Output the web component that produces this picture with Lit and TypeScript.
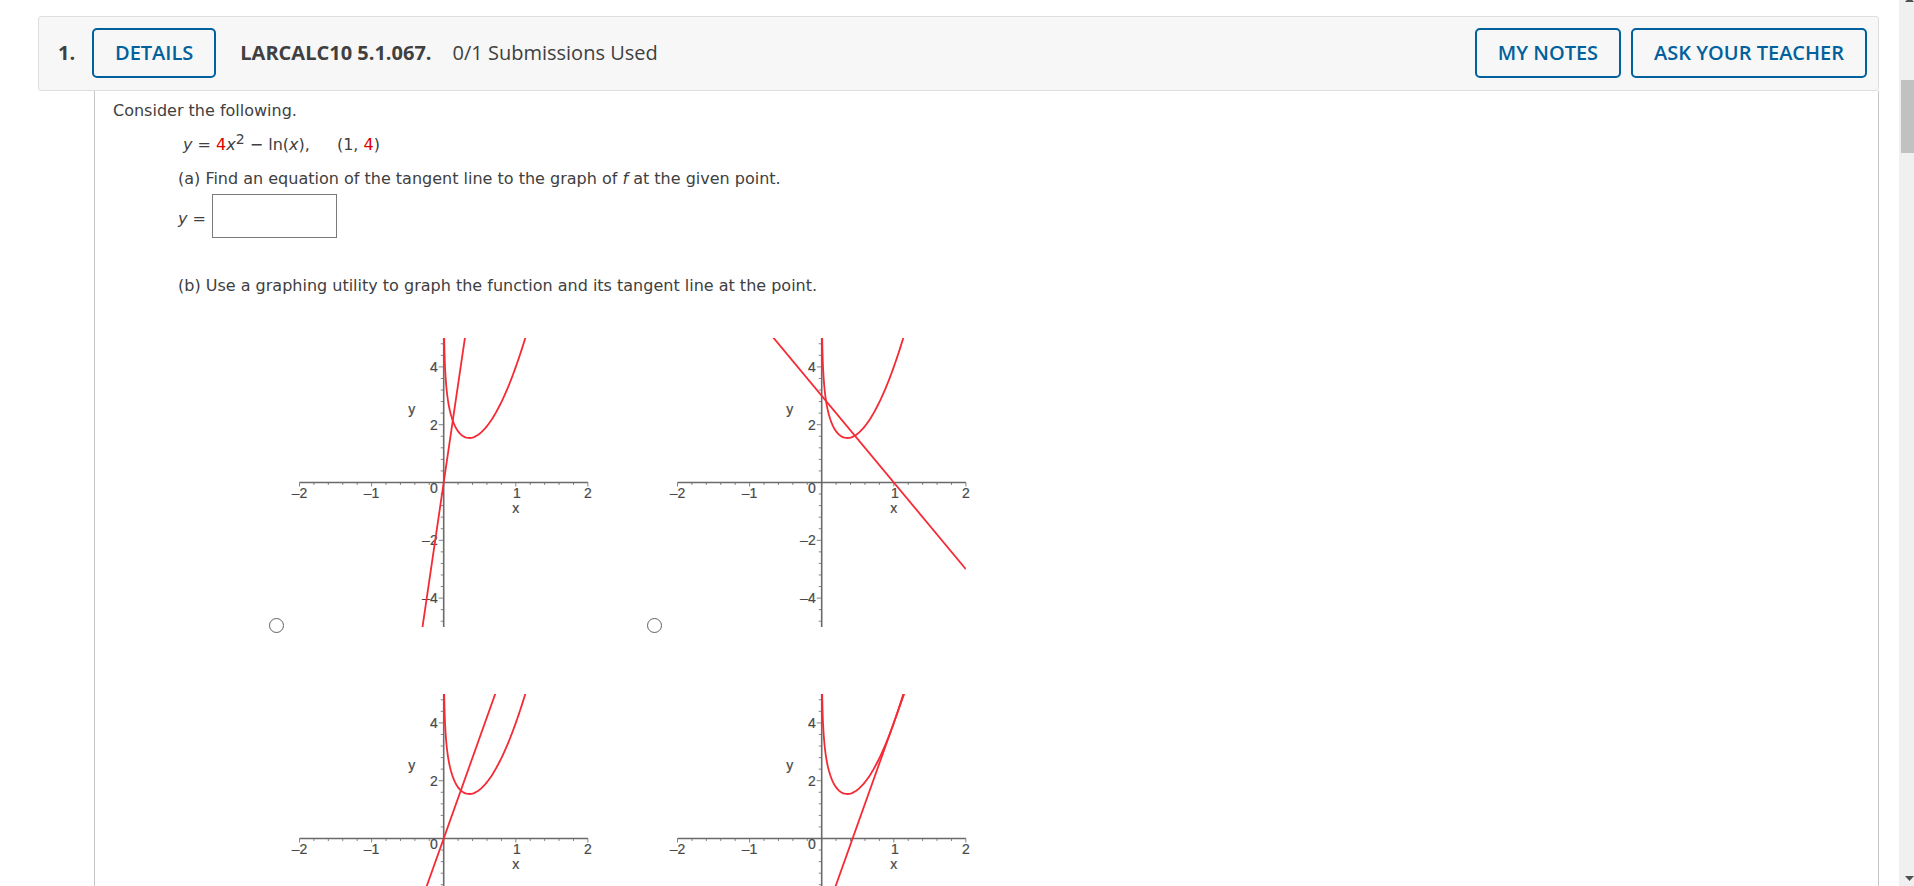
import { LitElement, html, svg, css } from "lit";
import { customElement, property } from "lit/decorators.js";

const UNIT_X = 72.1;
const UNIT_Y = 28.9;
const ORIGIN_X = 153.7;
const ORIGIN_Y = 152.5;

const px = (x: number) => +(ORIGIN_X + x * UNIT_X).toFixed(2);
const py = (y: number) => +(ORIGIN_Y - y * UNIT_Y).toFixed(2);

const curve = (() => {
  const points: string[] = [];
  for (let x = 0.004; x <= 1.2; x += x < 0.1 ? 0.004 : 0.02) {
    points.push(`${px(x)},${py(4 * x * x - Math.log(x))}`);
  }
  return points.join(" ");
})();

@customElement("tangent-graph")
export class TangentGraph extends LitElement {
  @property({ type: Number }) slope = 1;
  @property({ type: Number }) intercept = 0;

  static styles = css`
    :host {
      display: block;
    }
    .plot {
      display: block;
      width: 320px;
      height: 303px;
    }
    .axis {
      stroke: #6a6a6a;
      stroke-width: 1.6;
    }
    .tick {
      stroke: #858585;
      stroke-width: 1;
    }
    .line {
      fill: none;
      stroke: #f52a34;
      stroke-width: 1.8;
    }
    .number {
      font: 14px "Liberation Sans", Arial, sans-serif;
      fill: #484848;
      stroke: #484848;
      stroke-width: 0.2;
    }
    .mid {
      text-anchor: middle;
    }
    .end {
      text-anchor: end;
    }
  `;

  render() {
    const xTicks = Array.from({ length: 21 }, (_, i) => i - 10);
    const yTicks = Array.from({ length: 25 }, (_, i) => i - 12);
    const at = (x: number) => this.slope * x + this.intercept;
    return html`
      <svg class="plot" viewBox="0 0 320 303" role="img" aria-label="Graph of the function and a line">
        <defs>
          <clipPath id="frame">
            <rect x=${px(-2)} y=${py(5)} width=${4 * UNIT_X} height=${10 * UNIT_Y}></rect>
          </clipPath>
        </defs>
        ${xTicks.map(
          (i) => svg`<line class="tick" x1=${px(i / 5)} x2=${px(i / 5)} y1=${ORIGIN_Y} y2=${ORIGIN_Y + (i % 5 ? 2.5 : 4)}></line>`
        )}
        ${yTicks.map(
          (i) => svg`<line class="tick" y1=${py(i * 0.4)} y2=${py(i * 0.4)} x1=${ORIGIN_X} x2=${ORIGIN_X - (i % 5 ? 3 : 5)}></line>`
        )}
        <line class="axis" x1=${px(-2)} x2=${px(2)} y1=${ORIGIN_Y} y2=${ORIGIN_Y}></line>
        <line class="axis" x1=${ORIGIN_X} x2=${ORIGIN_X} y1=${py(5)} y2=${py(-5)}></line>
        ${[4, 2, -2, -4].map(
          (n) => svg`<text class="number end" x=${ORIGIN_X - 6} y=${py(n) + 5}>${n < 0 ? "–" + -n : n}</text>`
        )}
        <text class="number end" x=${ORIGIN_X - 6} y=${ORIGIN_Y + 10}>0</text>
        ${[-2, -1, 1, 2].map(
          (n) => svg`<text class="number mid" x=${px(n) + (n === 1 ? 1 : 0)} y=${ORIGIN_Y + 15}>${n < 0 ? "–" + -n : n}</text>`
        )}
        <text class="number mid" x=${px(1)} y=${ORIGIN_Y + 30}>x</text>
        <text class="number mid" x=${ORIGIN_X - 32} y=${ORIGIN_Y - 69}>y</text>
        <g clip-path="url(#frame)">
          <polyline class="line" points=${curve}></polyline>
          <line class="line" x1=${px(-2)} y1=${py(at(-2))} x2=${px(2)} y2=${py(at(2))}></line>
        </g>
      </svg>
    `;
  }
}

const CHOICES = [
  { slope: 17, intercept: 0 },
  { slope: -3, intercept: 3 },
  { slope: 7, intercept: 0 },
  { slope: 7, intercept: -3 },
];

@customElement("app-root")
export class AppRoot extends LitElement {
  static styles = css`
    :host {
      display: flex;
      height: 100vh;
      overflow: hidden;
      background: #fff;
      color: #404040;
      font: 16px/20px "DejaVu Sans", Verdana, sans-serif;
    }
    * {
      box-sizing: border-box;
    }
    .page {
      flex: 1;
      min-width: 0;
      padding: 16px 20px 0 38px;
      overflow: hidden;
    }
    .header {
      display: flex;
      align-items: center;
      min-height: 75px;
      padding: 0 11px 2px 19px;
      border: 1px solid #dedede;
      border-radius: 3px;
      background: #f7f7f7;
      font-family: "Open Sans", sans-serif;
      font-size: 20px;
      line-height: 28px;
    }
    .position {
      width: 34px;
      font-weight: 700;
    }
    .button {
      height: 50px;
      padding: 0 21px;
      border: 2px solid #00619c;
      border-radius: 5px;
      background: #f7f7f7;
      color: #00619c;
      font: 600 20px/28px "Open Sans", sans-serif;
    }
    .title {
      margin: 0 21px 0 24px;
      font-size: 20px;
      line-height: 28px;
      font-weight: 700;
    }
    .actions {
      display: flex;
      gap: 10px;
      margin-left: auto;
    }
    .body {
      min-height: 100vh;
      margin-left: 56px;
      padding: 10px 18px;
      border: solid #c6c6c6;
      border-width: 0 1px;
    }
    .text {
      margin: 0;
    }
    .work {
      padding-left: 65px;
    }
    .formula {
      margin: 14px 0 14px 5px;
    }
    .power {
      font-size: 14px;
      line-height: 0;
      vertical-align: 6px;
    }
    .given {
      color: #e00000;
    }
    .point {
      margin-left: 22px;
    }
    .answer {
      display: flex;
      align-items: center;
      gap: 6px;
      margin: 5px 0 38px;
    }
    .answer-label {
      padding-top: 6px;
    }
    .answer-box {
      width: 125px;
      height: 44px;
      border: 1px solid #7a7a7a;
      background: #fff;
      font: inherit;
    }
    .choices {
      display: grid;
      grid-template-columns: max-content max-content;
      gap: 53px 37px;
      margin: 34px 0 0 91px;
      padding: 0;
      border: 0;
    }
    .choice {
      display: flex;
      align-items: flex-end;
      gap: 6px;
    }
    .radio {
      width: 15px;
      height: 15px;
      margin: 0;
      appearance: none;
      border: 1px solid #606060;
      border-radius: 50%;
      background: #fff;
    }
    .radio:checked {
      background: radial-gradient(#00619c 50%, #fff 55%);
    }
    .scrollbar {
      display: flex;
      flex-direction: column;
      flex: 0 0 15px;
      padding-left: 2px;
      background: #f0f0f0;
      overflow: hidden;
    }
    .arrow {
      flex: none;
      width: 9px;
      height: 5px;
      margin-left: 4px;
      fill: #505050;
    }
    .up {
      margin-top: -3px;
    }
    .thumb {
      height: 73px;
      margin-top: 78px;
      background: #c1c1c1;
    }
    .down {
      margin-top: auto;
      margin-bottom: 5px;
    }
  `;

  render() {
    return html`
      <main class="page">
        <header class="header">
          <span class="position">1.</span>
          <button class="button" type="button">DETAILS</button>
          <h1 class="title">LARCALC10 5.1.067.</h1>
          <span>0/1 Submissions Used</span>
          <div class="actions">
            <button class="button" type="button">MY NOTES</button>
            <button class="button" type="button">ASK YOUR TEACHER</button>
          </div>
        </header>
        <section class="body">
          <p class="text">Consider the following.</p>
          <div class="work">
            <p class="formula"><i>y</i> = <span class="given">4</span><i>x</i><sup class="power">2</sup> − ln(<i>x</i>), <span class="point">(1, <span class="given">4</span>)</span></p>
            <p class="text">(a) Find an equation of the tangent line to the graph of <i>f</i> at the given point.</p>
            <div class="answer">
              <label class="answer-label" for="tangent"><i>y</i> =</label>
              <input class="answer-box" id="tangent" type="text" />
            </div>
            <p class="text" id="part-b">(b) Use a graphing utility to graph the function and its tangent line at the point.</p>
            <fieldset class="choices" aria-labelledby="part-b">
              ${CHOICES.map(
                (choice, i) => html`
                  <label class="choice">
                    <input class="radio" type="radio" name="graph" value=${i} />
                    <tangent-graph .slope=${choice.slope} .intercept=${choice.intercept}></tangent-graph>
                  </label>
                `
              )}
            </fieldset>
          </div>
        </section>
      </main>
      <div class="scrollbar" aria-hidden="true">
        <svg class="arrow up" viewBox="0 0 9 5"><path d="M0 5 4.500 0 9 5z"></path></svg>
        <div class="thumb"></div>
        <svg class="arrow down" viewBox="0 0 9 5"><path d="M0 0h9L4.500 5z"></path></svg>
      </div>
    `;
  }
}
